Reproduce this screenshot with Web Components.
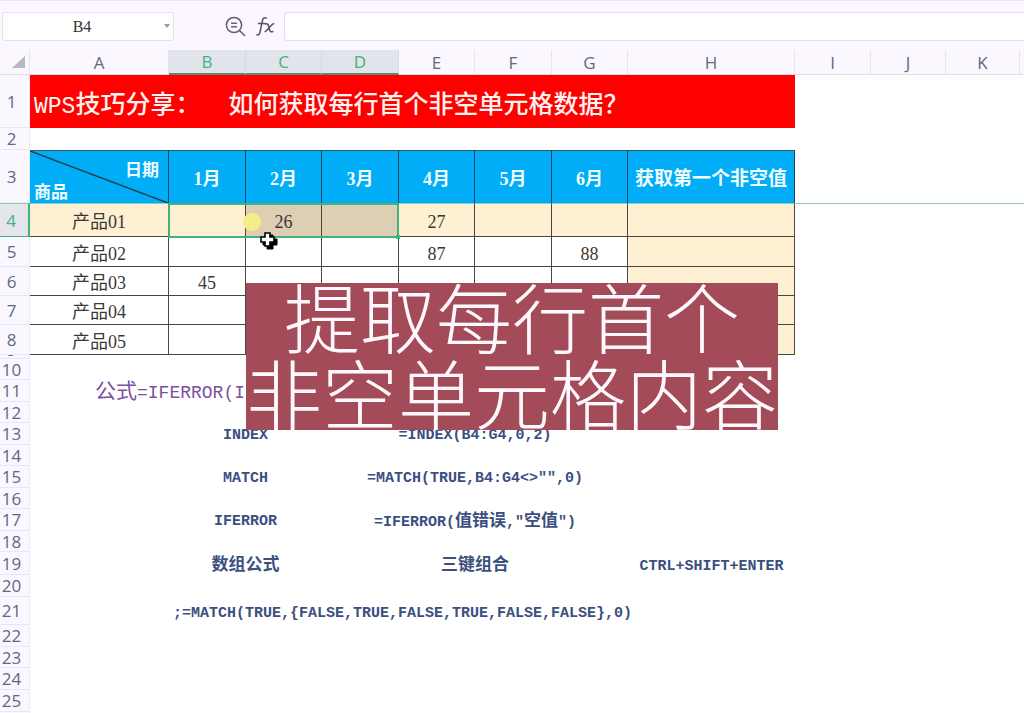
<!DOCTYPE html>
<html lang="zh-CN">
<head>
<meta charset="utf-8">
<title>如何获取每行首个非空单元格数据</title>
<style>
  body { margin: 0; background: #fff; overflow-x: hidden; }
</style>
</head>
<body>
<sheet-app></sheet-app>

<template id="app-tpl">
  <style>
    :host { display: flex; flex-direction: column; min-height: 100vh; background: #fff; }
    main { position: relative; }
  </style>
  <tool-strip>
    <name-box slot="name"></name-box>
    <formula-bar></formula-bar>
  </tool-strip>
  <main>
    <sheet-grid></sheet-grid>
    <video-caption>提取每行首个<br>非空单元格内容</video-caption>
  </main>
</template>

<template id="strip-tpl">
  <style>
    :host { display: flex; align-items: center; box-sizing: border-box; height: 50px; padding: 1px 0 0 2px; background: #fbf6ff; border-top: 1px solid #e8e6f2; }
    ::slotted(formula-bar) { flex: 1; }
  </style>
  <slot name="name"></slot><slot></slot>
</template>

<template id="name-tpl">
  <style>
    :host { display: flex; align-items: center; box-sizing: border-box; width: 172px; height: 29px; background: #fff; border: 1px solid #e3e1ec; border-radius: 3px; }
    input { flex: 1; min-width: 0; border: 0; padding: 2px 0 0; background: none; text-align: center; font: 16px/20px "Liberation Serif", serif; color: #333; outline: 0; }
    button { width: 12px; height: 20px; padding: 0; border: 0; background: none; display: flex; align-items: center; justify-content: center; }
  </style>
  <input aria-label="名称框" value="B4">
  <button aria-label="展开名称"><svg width="6" height="4" viewBox="0 0 6 4"><path d="M0 0h6L3 4z" fill="#999aa5"/></svg></button>
</template>

<template id="formula-tpl">
  <style>
    :host { display: flex; align-items: center; min-width: 0; padding-left: 51px; }
    button { border: 0; padding: 0; background: none; display: flex; }
    .fx { margin: 0 9px 0 10px; }
    input { flex: 1; min-width: 0; box-sizing: border-box; height: 29px; border: 1px solid #dfe1ed; border-right: 0; border-radius: 3px 0 0 3px; background: #fff; outline: 0; }
  </style>
  <button aria-label="查找"><svg width="21" height="21" viewBox="0 0 21 21" fill="none" stroke="#62616f" stroke-width="1.5"><circle cx="9" cy="9" r="7.6"/><path d="M14.5 14.5 20 20M6 7.3h6M6 10.8h6"/></svg></button>
  <button class="fx" aria-label="插入函数"><svg width="19" height="21" viewBox="0 0 19 21" fill="none" stroke="#55545f" stroke-width="1.5" stroke-linecap="round"><path d="M10.3 2.1C8.2 1.2 7 2.2 6.500 4.500L3.900 16.500C3.500 18.700 2.400 19.300.9 18.700M2.500 7.500h6.300M9.500 8c2.300-.8 2.800.5 3.400 3.400.7 3.700 1.500 5 3.900 4.100M17.600 7.800c-2.500.5-5.700 6.400-8.400 7.900"/></svg></button>
  <input aria-label="编辑栏">
</template>

<template id="caption-tpl">
  <style>
    :host { position: absolute; left: 246px; top: 233px; box-sizing: border-box; width: 532px; height: 147px; background: #a34b58; color: #fff8fc; font: 300 76px/76px "Noto Sans CJK SC", sans-serif; text-align: center; white-space: nowrap; }
    slot { display: block; margin-top: -6px; }
  </style>
  <slot></slot>
</template>

<template id="range-tpl">
  <style>
    :host { position: absolute; left: -1px; top: -1px; z-index: 1; box-sizing: border-box; width: 231px; height: 35px; border: 2px solid #41b27c; }
    i { position: absolute; left: 73px; top: 8px; width: 18px; height: 18px; border-radius: 50%; background: #f5ee84; }
    b { position: absolute; right: -3px; bottom: -3px; width: 4px; height: 4px; background: #41b27c; }
    svg { position: absolute; left: 89px; top: 26px; }
  </style>
  <i></i><b></b>
  <svg width="19" height="19" viewBox="0 0 19 19"><path d="M8 4h6v4h4v6h-4v4H8v-4H4V8h4z" fill="#000" stroke="#000"/><path d="M6 2h5v4h4v5h-4v4H6v-4H2V6h4z" fill="#fff" stroke="#000" stroke-width="1.600"/></svg>
</template>

<template id="grid-tpl">
  <style>
    :host { display: block; overflow: hidden; }
    table { table-layout: fixed; width: 100%; min-width: 1024px; border-spacing: 0; font: 18px/18px "Liberation Serif", "Noto Sans CJK SC", serif; color: #3b3835; }
    th, td { box-sizing: border-box; padding: 0; text-align: center; vertical-align: middle; white-space: nowrap; font-weight: 400; }
    thead th, tbody th { background: #fbf7ff; color: #606980; font: 17px/17px "Open Sans", sans-serif; }
    thead th { height: 25px; border-right: 1px solid #e6e4f0; border-bottom: 1px solid #e3dbe8; }
    thead th:last-child { border-right: 0; }
    thead th.on { background: #e2e4eb; color: #3fb37e; border-right-color: #d7dae2; border-bottom: 2px solid #5e8769; }
    thead svg { display: block; margin-left: 12px; }
    tbody th { border-right: 1px solid #ece8f4; border-bottom: 1px solid #e9e6f2; padding-right: 6px; }
    tbody th.on { background: #e4e6ec; color: #3fb37e; border-right: 2px solid #41b27c; border-bottom-color: #41b27c; border-top: 1px solid #8fc9b8; }
    .clip { height: 3px; overflow: hidden; display: flex; align-items: flex-end; justify-content: center; }
    .title { background: #f00; color: #fff3f0; text-align: left; padding: 8px 0 0 4px; font-size: 25px; line-height: 30px; font-weight: 500; }
    .title code { font: 23px/30px "Liberation Mono", monospace; }
    .title span { margin-left: 28px; }
    .c { border-right: 1px solid #4b4542; border-bottom: 1px solid #4b4542; padding-top: 4px; }
    .h { background: #00adf6; color: #f1fcff; font-weight: 700; border-top: 1px solid #345668; border-bottom: 0; border-right-color: #17455f; }
    .diag { padding: 0; }
    .wide { font-size: 19px; }
    .cream { background: #fef0d2; }
    .tan { background: #deceb4; }
    .top { border-top: 1px solid #8fc9b8; }
    .edge { border-top: 1px solid #96c3cb; }
    .anchor { position: relative; }
    .split { height: 52px; box-sizing: border-box; padding: 11px 9px 1px 4px; display: flex; flex-direction: column; justify-content: space-between; font-size: 17px; position: relative; }
    .split span { align-self: flex-start; line-height: 18px; }
    .split span:first-of-type { align-self: flex-end; }
    .split svg { position: absolute; inset: 0; width: 100%; height: 100%; }
    .f { color: #3b4f80; font: 700 15px/16px "Liberation Mono", "Noto Sans CJK SC", monospace; padding-top: 4px; }
    .f span { font-size: 17px; line-height: 16px; }
    .k { padding-top: 6px; }
    .left { text-align: left; padding: 6px 0 0 4px; }
    .p { color: #7d50a0; text-align: left; padding: 4px 0 0 65px; font: 18px/16px "Liberation Mono", "Noto Sans CJK SC", monospace; }
    .p span { font-size: 21px; line-height: 16px; }
  </style>
  <table>
    <colgroup></colgroup>
    <thead><tr></tr></thead>
    <tbody></tbody>
  </table>
</template>

<script>
  class Base extends HTMLElement {
    constructor() {
      super();
      this.attachShadow({ mode: 'open' })
        .append(document.getElementById(this.constructor.tpl).content.cloneNode(true));
    }
  }
  const define = (name, tpl) => customElements.define(name, class extends Base { static tpl = tpl; });

  const COLS = [30, 139, 77, 76, 77, 76, 77, 76, 167, 76, 75, 74, 0];
  const empty = n => `<td colspan="${n}"></td>`;
  const cells = (list, cls = 'c') => list.map(v => `<td class="${cls}">${v}</td>`).join('');
  const product = (name, list) => cells([name, ...list]) + '<td class="c cream"></td>' + empty(4);
  const formula = (name, text, extra = '', cls = 'f') =>
    `<td></td><td class="${cls}" colspan="2">${name}</td><td class="${cls}" colspan="4">${text}</td><td class="${cls}">${extra}</td>` + empty(4);

  /* row number, height, cells */
  const ROWS = [
    [1, 53, '<td class="title" colspan="8"><code>WPS</code>技巧分享：<span>如何获取每行首个非空单元格数据？</span></td>' + empty(4)],
    [2, 22, empty(12)],
    [3, 53, '<td class="c h diag"><div class="split"><svg viewBox="0 0 138 52" preserveAspectRatio="none"><path d="M0 0 138 52" stroke="#1f3d50" stroke-width="1.500"/></svg><span>日期</span><span>商品</span></div></td>'
      + cells(['1月', '2月', '3月', '4月', '5月', '6月'], 'c h') + '<td class="c h wide">获取第一个非空值</td>' + empty(4)],
    [4, 34, '<td class="c cream top">产品01</td><td class="c cream top anchor"><cell-range></cell-range></td><td class="c tan top">26</td><td class="c tan top"></td>'
      + cells(['27', '', '', ''], 'c cream top') + '<td class="edge" colspan="4"></td>'],
    [5, 30, product('产品02', ['', '', '', '87', '', '88'])],
    [6, 29, product('产品03', ['45', '', '', '', '', ''])],
    [7, 29, product('产品04', ['', '', '', '', '', ''])],
    [8, 30, product('产品05', ['', '', '', '', '', ''])],
    [9, 4, empty(12)],
    [10, 21, empty(12)],
    [11, 22, '<td class="p" colspan="8"><span>公式</span>=IFERROR(I</td>' + empty(4)],
    [12, 21, empty(12)],
    [13, 22, formula('INDEX', '=INDEX(B4:G4,0,2)')],
    [14, 21, empty(12)],
    [15, 22, formula('MATCH', '=MATCH(TRUE,B4:G4&lt;&gt;"",0)')],
    [16, 21, empty(12)],
    [17, 22, formula('IFERROR', '=IFERROR(<span>值错误</span>,"<span>空值</span>")')],
    [18, 21, empty(12)],
    [19, 22, formula('<span>数组公式</span>', '<span>三键组合</span>', 'CTRL+SHIFT+ENTER', 'f k')],
    [20, 22, empty(12)],
    [21, 28, '<td></td><td class="f left" colspan="7">;=MATCH(TRUE,{FALSE,TRUE,FALSE,TRUE,FALSE,FALSE},0)</td>' + empty(4)],
    [22, 22, empty(12)],
    [23, 21, empty(12)],
    [24, 22, empty(12)],
    [25, 22, empty(12)],
    ['', 2, empty(12)]
  ];

  define('cell-range', 'range-tpl');
  customElements.define('sheet-grid', class extends Base {
    static tpl = 'grid-tpl';
    connectedCallback() {
      const $ = s => this.shadowRoot.querySelector(s);
      $('colgroup').innerHTML = COLS.map(w => `<col${w ? ` style="width:${w}px"` : ''}>`).join('');
      $('thead tr').innerHTML = '<th aria-label="全选"><svg width="13" height="12" viewBox="0 0 13 12"><path d="M13 0v12H0z" fill="#b9b8c1"/></svg></th>'
        + [...'ABCDEFGHIJK', ''].map(l => `<th${l && 'BCD'.includes(l) ? ' class="on"' : ''}>${l}</th>`).join('');
      $('tbody').innerHTML = ROWS.map(([n, h, html]) =>
        `<tr style="height:${h}px"><th${n === 4 ? ' class="on"' : ''}>${n === 9 ? '<div class="clip">9</div>' : n}</th>${html}</tr>`).join('');
    }
  });
  define('video-caption', 'caption-tpl');
  define('name-box', 'name-tpl');
  define('formula-bar', 'formula-tpl');
  define('tool-strip', 'strip-tpl');
  define('sheet-app', 'app-tpl');
</script>
</body>
</html>
